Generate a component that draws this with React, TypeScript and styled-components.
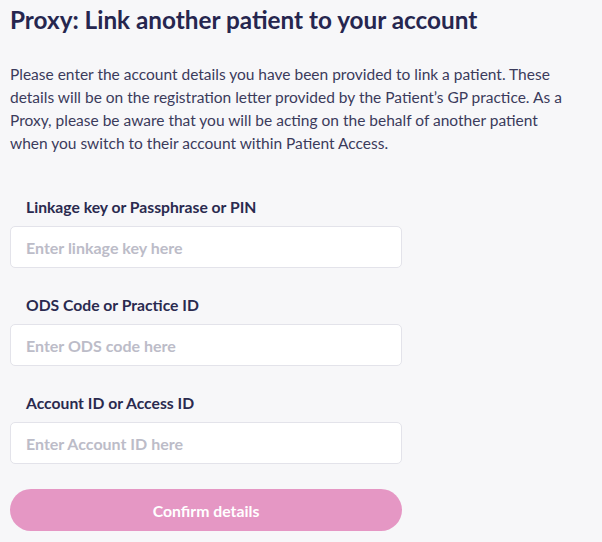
import React from 'react';
import styled, { createGlobalStyle } from 'styled-components';

const GlobalStyle = createGlobalStyle`
  html, body {
    margin: 0;
    padding: 0;
    background: #f7f7f9;
  }
  body {
    font-family: Lato, "Open Sans", sans-serif;
    -webkit-font-smoothing: antialiased;
  }
`;

const Page = styled.main`
  width: 602px;
  height: 542px;
  box-sizing: border-box;
  padding: 5px 10px 0 10px;
  background: #f7f7f9;
  overflow: hidden;
`;

const Title = styled.h1`
  margin: 0;
  font-size: 24.3px;
  line-height: 30px;
  font-weight: 700;
  color: #26264f;
`;

const Intro = styled.p`
  margin: 28px 0 0 0;
  width: 556px;
  font-size: 15.5px;
  line-height: 23px;
  color: #3b3b5c;
`;

const Form = styled.form`
  display: flex;
  flex-direction: column;
  gap: 25px;
  width: 392px;
  margin-top: 40px;
`;

const Field = styled.div`
  display: flex;
  flex-direction: column;
  gap: 7px;
`;

const Label = styled.label`
  padding-left: 16px;
  font-size: 15.7px;
  line-height: 24px;
  font-weight: 700;
  color: #2a2a4f;
`;

const Input = styled.input`
  box-sizing: border-box;
  height: 42px;
  padding: 0 15px;
  border: 1px solid #e3e3ea;
  border-radius: 5px;
  background: #ffffff;
  font-family: inherit;
  font-size: 16px;
  font-weight: 700;
  color: #2a2a4f;
  outline: none;

  &::placeholder {
    color: #bcbcc8;
  }
`;

const ConfirmButton = styled.button`
  height: 42px;
  border: none;
  border-radius: 21px;
  background: #e597c4;
  color: #ffffff;
  font-family: inherit;
  font-size: 15.8px;
  font-weight: 700;
  cursor: not-allowed;
`;

const fields = [
  { id: 'linkage', label: 'Linkage key or Passphrase or PIN', placeholder: 'Enter linkage key here' },
  { id: 'ods', label: 'ODS Code or Practice ID', placeholder: 'Enter ODS code here' },
  { id: 'account', label: 'Account ID or Access ID', placeholder: 'Enter Account ID here' },
];

export default function App() {
  return (
    <>
      <GlobalStyle />
      <Page>
        <Title>Proxy: Link another patient to your account</Title>
        <Intro>
          Please enter the account details you have been provided to link a patient. These
          details will be on the registration letter provided by the Patient’s GP practice. As a
          Proxy, please be aware that you will be acting on the behalf of another patient
          when you switch to their account within Patient Access.
        </Intro>
        <Form onSubmit={(e) => e.preventDefault()}>
          {fields.map((f) => (
            <Field key={f.id}>
              <Label htmlFor={f.id}>{f.label}</Label>
              <Input id={f.id} placeholder={f.placeholder} />
            </Field>
          ))}
          <ConfirmButton type="submit" disabled>
            Confirm details
          </ConfirmButton>
        </Form>
      </Page>
    </>
  );
}
